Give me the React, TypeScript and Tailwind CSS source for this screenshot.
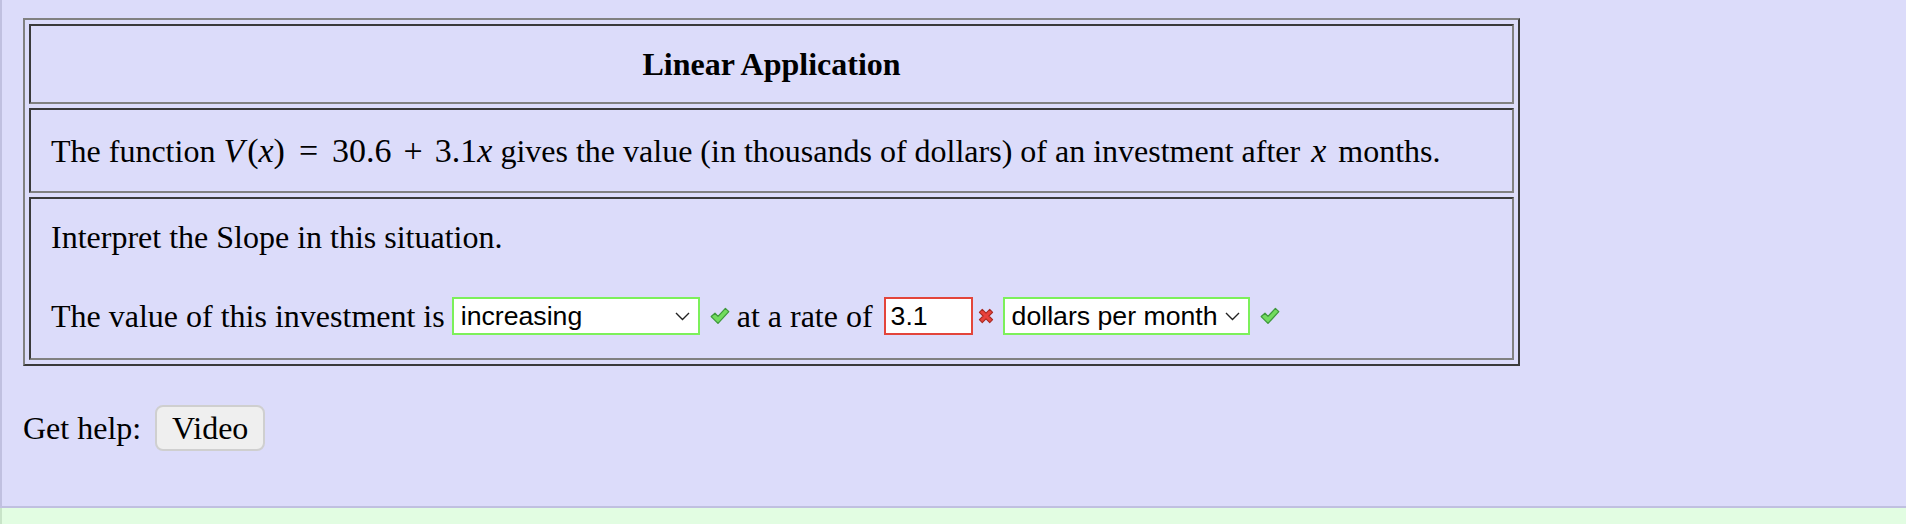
import React from "react";

// ---------- ICONS ----------
function Check() {
  return (
    <svg width="20" height="18" viewBox="0 0 20 18" className="shrink-0">
      <path
        d="M1.2 9.6 L5 6.2 L8 9.4 L15.4 1.4 L18.8 4.6 L8 16.4 Z"
        fill="#72dc5e"
        stroke="#3f9a3c"
        strokeWidth="1.3"
        strokeLinejoin="round"
      />
    </svg>
  );
}

function Cross() {
  return (
    <svg width="16" height="16" viewBox="0 0 15 15" className="shrink-0">
      <path
        d="M1.3 4 L4 1.3 L7.5 4.8 L11 1.3 L13.7 4 L10.2 7.5 L13.7 11 L11 13.7 L7.5 10.2 L4 13.7 L1.3 11 L4.8 7.5 Z"
        fill="#e8413b"
        stroke="#a8291f"
        strokeWidth="1"
        strokeLinejoin="round"
      />
    </svg>
  );
}

function Chevron() {
  return (
    <svg width="15" height="9" viewBox="0 0 15 9" className="shrink-0">
      <path d="M1 1 L7.5 7.5 L14 1" fill="none" stroke="#222" strokeWidth="1.4" />
    </svg>
  );
}

// ---------- FORM BITS ----------
function FakeSelect({ value, width }: { value: string; width: string }) {
  return (
    <div
      className={`${width} flex h-[38px] items-center justify-between border-2 border-[#7cf05a] bg-white pl-[7px] pr-[8px] font-['Liberation_Sans',Arial,sans-serif] text-[26.67px] leading-none`}
    >
      <span>{value}</span>
      <Chevron />
    </div>
  );
}

function Cell({ className, children }: any) {
  return (
    <div
      className={`flex border-2 border-t-[#3a3a3a] border-l-[#3a3a3a] border-r-[#808080] border-b-[#808080] px-[20px] ${className}`}
    >
      {children}
    </div>
  );
}

// ---------- MAIN ----------
export default function App() {
  return (
    <div className="flex min-h-screen flex-col font-['Liberation_Serif','Times_New_Roman',serif] text-[32px] leading-[37px] text-black">
      <div className="h-[508px] border-b-2 border-l-2 border-[#c0c0e0] bg-[#dcdcfa] pl-[21px] pt-[18px]">
        {/* problem table */}
        <div className="flex w-[1497px] flex-col gap-[4px] border-2 border-t-[#808080] border-l-[#808080] border-r-[#3a3a3a] border-b-[#3a3a3a] p-[4px]">
          <Cell className="h-[80px] items-center justify-center font-bold">
            Linear Application
          </Cell>

          <Cell className="h-[85px] items-center whitespace-nowrap">
            <span>
              The function{" "}
              <span className="text-[34px]">
                <span className="italic">V</span>
                <span className="ml-[3px]">(</span>
                <span className="italic">x</span>
                <span>)</span>
                <span className="mx-[14px]">=</span>
                <span>30.6</span>
                <span className="mx-[12px]">+</span>
                <span>3.1</span>
                <span className="italic">x</span>
              </span>{" "}
              gives the value (in thousands of dollars) of an investment after{" "}
              <span className="ml-[3px] mr-[4px] text-[34px] italic">x</span> months.
            </span>
          </Cell>

          <Cell className="h-[163px] flex-col pt-[20px]">
            <div>Interpret the Slope in this situation.</div>
            <div className="mt-[41px] flex h-[38px] items-center whitespace-nowrap">
              <span>The value of this investment is</span>
              <div className="ml-[7px]">
                <FakeSelect value="increasing" width="w-[248px]" />
              </div>
              <div className="ml-[10px]">
                <Check />
              </div>
              <span className="ml-[7px]">at a rate of</span>
              <div className="ml-[11px] flex h-[38px] w-[89px] items-center border-2 border-[#e3453b] bg-white pl-[5px] font-['Liberation_Sans',Arial,sans-serif] text-[26.67px] leading-none">
                3.1
              </div>
              <div className="ml-[5px]">
                <Cross />
              </div>
              <div className="ml-[9px]">
                <FakeSelect value="dollars per month" width="w-[247px]" />
              </div>
              <div className="ml-[10px]">
                <Check />
              </div>
            </div>
          </Cell>
        </div>

        {/* help */}
        <div className="mt-[39px] flex h-[46px] items-center">
          <span>Get help:</span>
          <button className="ml-[14px] h-[46px] w-[110px] rounded-[8px] border-2 border-[#cfcfcf] bg-[#efefef] leading-none">
            Video
          </button>
        </div>
      </div>
      <div className="flex-1 border-l-2 border-[#c8e4c8] bg-[#e2fde2]" />
    </div>
  );
}
